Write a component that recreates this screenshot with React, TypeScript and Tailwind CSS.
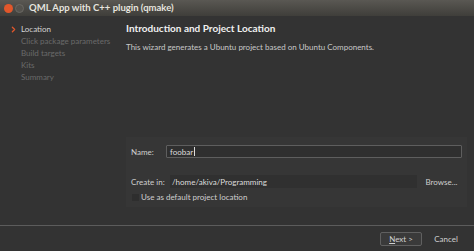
import { ChevronRight } from "lucide-react";

const steps = ["Location", "Click package parameters", "Build targets", "Kits", "Summary"];

export default function App() {
  return (
    <div className="flex h-[251px] w-[474px] flex-col bg-[#333333] font-['Lato',sans-serif] text-[#dcdcdc]">
      <div className="flex h-[16px] items-center bg-gradient-to-b from-[#5a5853] to-[#3f3e3a] pl-[4px]">
        <div className="h-[9px] w-[9px] rounded-full bg-[#e2572b]" />
        <div className="ml-[2px] h-[9px] w-[9px] rounded-full border border-[#6a6863] bg-[#55534e]" />
        <span className="ml-[5px] text-[9.5px] font-bold text-[#e6e4df]">QML App with C++ plugin (qmake)</span>
      </div>

      <div className="flex flex-1">
        <nav className="w-[126px] pt-[7px] pl-[9px]">
          {steps.map((s, i) => (
            <div key={s} className="flex h-[12px] items-center text-[8px]">
              <span className="flex w-[12px] items-center">
                {i === 0 && <ChevronRight size={9} strokeWidth={3.5} className="text-[#e2572b]" />}
              </span>
              <span className={i === 0 ? "text-[#d4d4d4]" : "text-[#6a6a6a]"}>{s}</span>
            </div>
          ))}
        </nav>

        <main className="flex flex-1 flex-col pr-[7px]">
          <h1 className="mt-[7px] text-[10px] font-bold leading-none text-[#f0f0f0]">Introduction and Project Location</h1>
          <p className="mt-[10px] text-[8px] leading-none text-[#c8c8c8]">
            This wizard generates a Ubuntu project based on Ubuntu Components.
          </p>

          <div className="mt-[86px] flex h-[70px] flex-col bg-[#363636] pl-[5px] pr-[5px] text-[8px]">
            <div className="mt-[8px] flex h-[13px] items-center">
              <span className="w-[35px] text-[#cfcfcf]">Name:</span>
              <div className="flex h-[13px] flex-1 items-center rounded-[1px] border border-[#5e5e5e] bg-[#2f2f2f] pl-[3px] text-[#dcdcdc]">
                foobar<span className="ml-[1px] h-[9px] w-[1px] bg-[#dcdcdc]" />
              </div>
            </div>
            <div className="mt-[17px] flex h-[13px] items-center">
              <span className="w-[39px] text-[#cfcfcf]">Create in:</span>
              <div className="flex h-[13px] flex-1 items-center bg-[#303030] pl-[2px] text-[#dcdcdc]">
                /home/akiva/Programming
              </div>
              <div className="ml-[4px] flex h-[13px] w-[41px] items-center justify-center text-[#cfcfcf]">Browse...</div>
            </div>
            <div className="mt-[3px] flex items-center">
              <div className="ml-[1px] h-[7px] w-[7px] bg-[#2e2e2e]" />
              <span className="ml-[2px] text-[#cfcfcf]">Use as default project location</span>
            </div>
          </div>
        </main>
      </div>

      <div className="h-[1px] bg-[#5c5c5c]" />
      <div className="flex h-[25px] items-center justify-end pr-[9px] text-[8px]">
        <div className="flex h-[14px] w-[42px] items-center justify-center rounded-[2px] border border-[#606060] bg-[#3a3a3a] text-[#d0d0d0]">
          <span><span className="underline">N</span>ext &gt;</span>
        </div>
        <div className="ml-[5px] flex h-[14px] w-[38px] items-center justify-center text-[#d0d0d0]">Cancel</div>
      </div>
    </div>
  );
}
